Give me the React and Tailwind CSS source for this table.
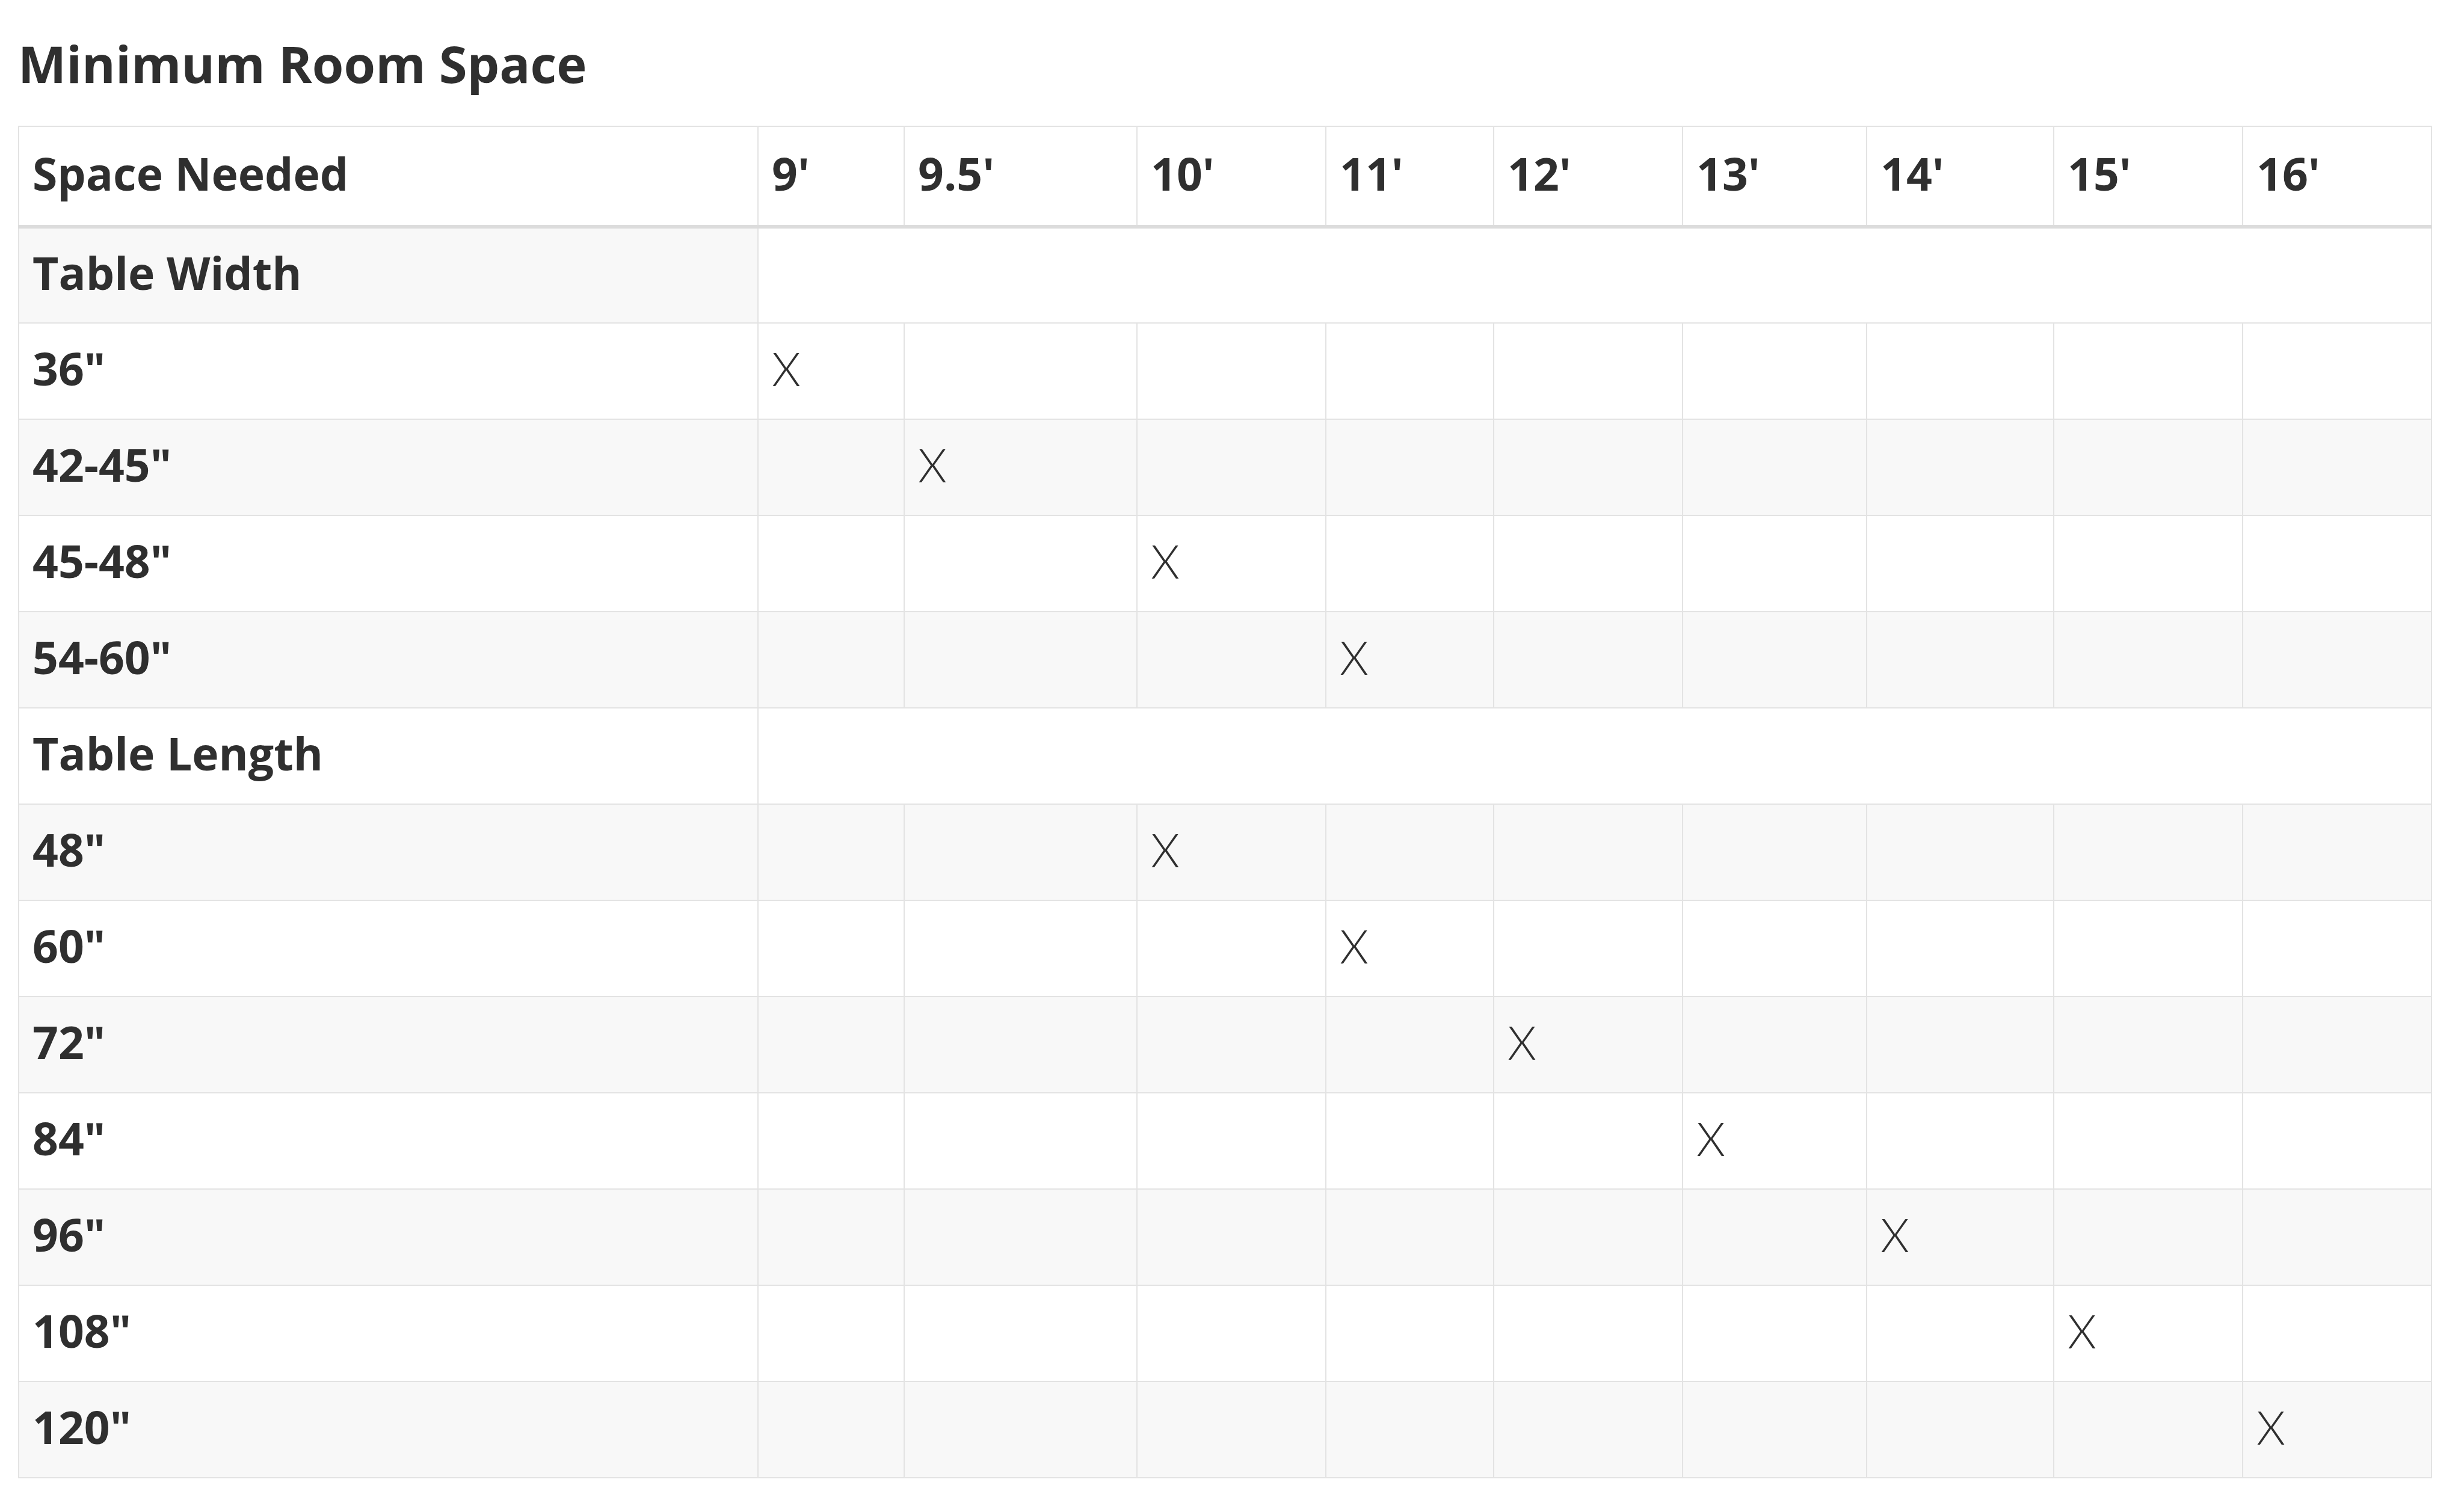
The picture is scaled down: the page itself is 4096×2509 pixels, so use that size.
const cols = ["9'", "9.5'", "10'", "11'", "12'", "13'", "14'", "15'", "16'"];

const rows = [
  { label: "Table Width", section: true },
  { label: '36"', mark: 0 },
  { label: '42-45"', mark: 1 },
  { label: '45-48"', mark: 2 },
  { label: '54-60"', mark: 3 },
  { label: "Table Length", section: true },
  { label: '48"', mark: 2 },
  { label: '60"', mark: 3 },
  { label: '72"', mark: 4 },
  { label: '84"', mark: 5 },
  { label: '96"', mark: 6 },
  { label: '108"', mark: 7 },
  { label: '120"', mark: 8 },
];

const cell = "border-2 border-[#e3e3e3] px-[22px] pb-[9px] align-middle text-left";

export default function App() {
  return (
    <div className="min-h-screen bg-white pl-[30px] pt-[63px] font-['Open_Sans',sans-serif] text-[#2f2f2f]">
      <h2 className="text-[85px] font-bold leading-none">Minimum Room Space</h2>

      <table className="mt-[61px] w-[4011px] table-fixed border-collapse">
        <colgroup>
          <col className="w-[1229px]" />
          <col className="w-[243px]" />
          <col className="w-[387px]" />
          <col className="w-[314px]" />
          <col className="w-[279px]" />
          <col className="w-[314px]" />
          <col className="w-[306px]" />
          <col className="w-[311px]" />
          <col className="w-[314px]" />
          <col className="w-[314px]" />
        </colgroup>
        <thead>
          <tr className="h-[167px]">
            <th className={`${cell} border-b-[6px] border-b-[#dcdcdc] text-[75px] font-bold`}>Space Needed</th>
            {cols.map((c) => (
              <th key={c} className={`${cell} border-b-[6px] border-b-[#dcdcdc] text-[75px] font-bold`}>
                {c}
              </th>
            ))}
          </tr>
        </thead>
        <tbody>
          {rows.map((r) => (
            <tr key={r.label} className="h-[160px] odd:bg-[#f8f8f8]">
              <td className={`${cell} text-[75px] font-bold`}>{r.label}</td>
              {r.section ? (
                <td colSpan={9} className={`${cell} bg-white`} />
              ) : (
                cols.map((c, i) => (
                  <td key={c} className={`${cell} font-['Lato',sans-serif] text-[77px] font-light`}>
                    {i === r.mark ? "X" : ""}
                  </td>
                ))
              )}
            </tr>
          ))}
        </tbody>
      </table>
    </div>
  );
}
